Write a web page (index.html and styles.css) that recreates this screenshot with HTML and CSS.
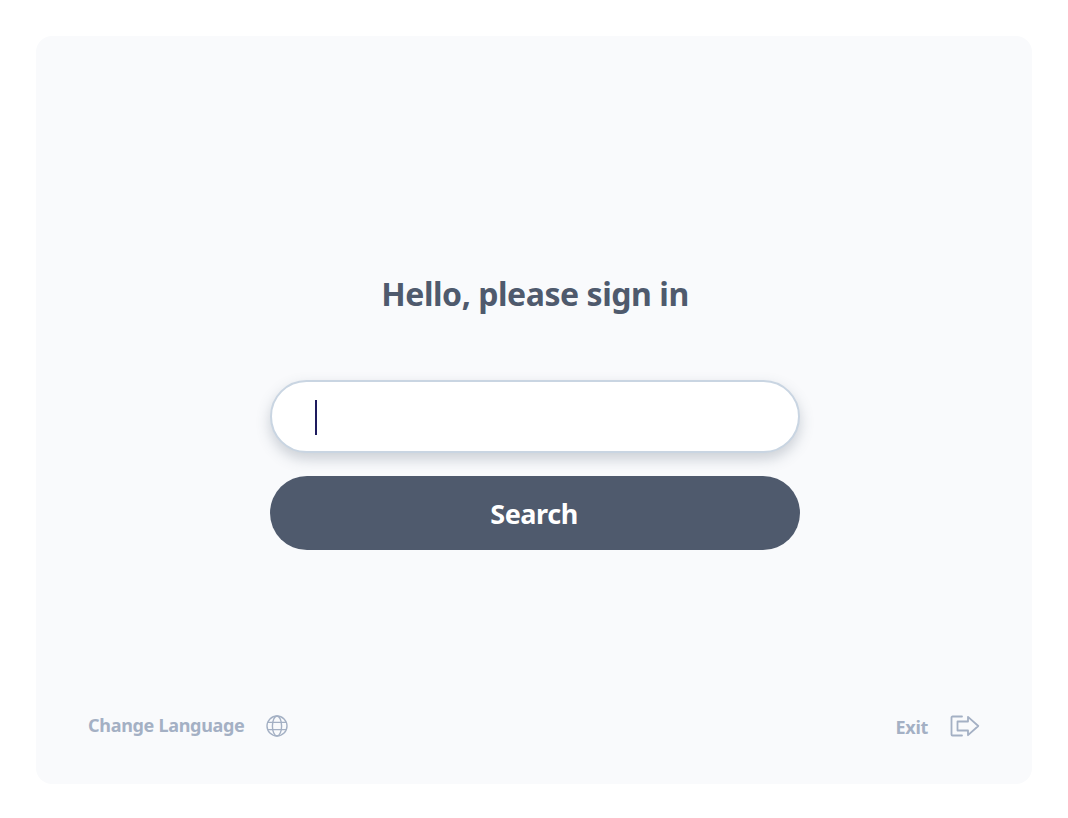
FILE: index.html
```html
<!DOCTYPE html>
<html lang="en">
<head>
<meta charset="utf-8">
<title>Sign in</title>
<link rel="stylesheet" href="styles.css">
</head>
<body>
<main class="panel">
  <section class="center">
    <h1 class="title">Hello, please sign in</h1>
    <div class="field"><span class="caret"></span></div>
    <button class="search" type="button">Search</button>
  </section>
  <footer class="footer">
    <a class="link">
      <span>Change Language</span>
      <svg class="globe" width="22" height="22" viewBox="0 0 22 22" fill="none" stroke="#a4b0c4" stroke-width="1.4">
        <circle cx="11" cy="11" r="10"/>
        <ellipse cx="11" cy="11" rx="4.6" ry="10"/>
        <path d="M1.800 7.400h18.400M1.800 14.600h18.400"/>
      </svg>
    </a>
    <a class="link exit">
      <span>Exit</span>
      <svg class="exit-icon" width="30" height="22" viewBox="0 0 30 22" fill="none" stroke="#a4b0c4" stroke-width="1.800" stroke-linejoin="round" stroke-linecap="round">
        <path d="M12 1.500H2.500a1 1 0 0 0-1 1v17a1 1 0 0 0 1 1H12"/>
        <path d="M7.500 6.500H18V1.800L28.300 11 18 20.200V15.500H7.500z"/>
      </svg>
    </a>
  </footer>
</main>
</body>
</html>
```
FILE: styles.css
```css
* { box-sizing: border-box; }
html, body { margin: 0; height: 100%; background: #fff; }
body {
  padding: 36px 36px 34px;
  font-family: "Noto Sans", "Open Sans", sans-serif;
}
.panel {
  height: 748px;
  background: #f9fafc;
  border-radius: 16px;
  display: flex;
  flex-direction: column;
}
.center {
  margin: 0 232px 0 234px;
  padding-top: 235px;
  flex: 1;
}
.title {
  margin: 0 0 64px;
  height: 45px;
  line-height: 45px;
  font-size: 32px;
  font-weight: 700;
  color: #4f5a6d;
  text-align: center;
  letter-spacing: -0.45px;
}
.field {
  height: 73px;
  margin: 0 0 23px;
  padding: 18px 43px 0;
  background: #fff;
  border: 2px solid #c9d5e2;
  border-radius: 37px;
  box-shadow: 0 6px 14px rgba(70, 85, 105, 0.26);
}
.caret {
  display: block;
  width: 2px;
  height: 35px;
  background: #1e1b5e;
}
.search {
  display: block;
  width: 100%;
  height: 74px;
  padding: 0 2px 0 0;
  border: 0;
  border-radius: 37px;
  background: #4f5a6d;
  color: #fff;
  font: 700 27px "Noto Sans", "Open Sans", sans-serif;
  letter-spacing: -0.45px;
}
.footer {
  display: flex;
  justify-content: space-between;
  align-items: center;
  padding: 0 52px 45px;
}
.link {
  display: flex;
  align-items: center;
  gap: 21px;
  color: #a4b0c4;
  font-size: 18px;
  font-weight: 700;
  line-height: 24px;
  letter-spacing: -0.3px;
}
.exit { gap: 22px; }
.link span { margin-top: -2px; }
.exit span { margin-top: 2px; }
```
